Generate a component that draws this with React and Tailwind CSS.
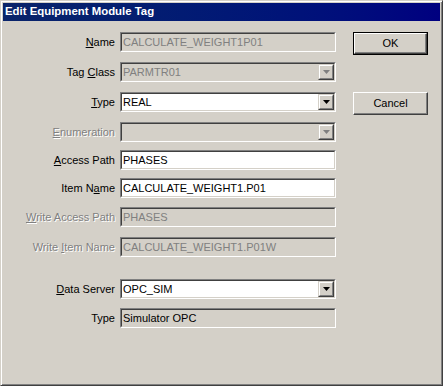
import React from 'react';

const FONT = "font-['Liberation_Sans',Arial,sans-serif]";

export default function App() {
  return (
    <div className={`${FONT} w-[443px] h-[386px] bg-[#d4d0c8] border border-t-[#d4d0c8] border-l-[#d4d0c8] border-b-[#404040] border-r-[#404040] shadow-[inset_1px_1px_0_#ffffff,inset_-1px_-1px_0_#808080] p-[2px] flex flex-col text-[11px] text-black`}>
      <div className="h-[18px] bg-gradient-to-r from-[#0a246a] to-[#000080] flex items-center pl-[2px] text-white font-bold text-[11.4px]">
        Edit Equipment Module Tag
      </div>

      <div className="flex">
        <div className="w-[333px] flex flex-col">
          <Row label={<><u>N</u>ame</>} mt="mt-[11px]">
            <TextBox value="CALCULATE_WEIGHT1P01" disabled />
          </Row>
          <Row label={<>Tag <u>C</u>lass</>} mt="mt-[10px]">
            <Combo value="PARMTR01" disabled />
          </Row>
          <Row label={<><u>T</u>ype</>} mt="mt-[10px]">
            <Combo value="REAL" />
          </Row>
          <Row label={<><u>E</u>numeration</>} mt="mt-[10px]" dim>
            <Combo value="" disabled />
          </Row>
          <Row label={<><u>A</u>ccess Path</>} mt="mt-[8px]">
            <TextBox value="PHASES" />
          </Row>
          <Row label={<>Item N<u>a</u>me</>} mt="mt-[8px]">
            <TextBox value="CALCULATE_WEIGHT1.P01" />
          </Row>
          <Row label={<><u>W</u>rite Access Path</>} mt="mt-[9px]" dim>
            <TextBox value="PHASES" disabled />
          </Row>
          <Row label={<>Write <u>I</u>tem Name</>} mt="mt-[10px]" dim>
            <TextBox value="CALCULATE_WEIGHT1.P01W" disabled />
          </Row>
          <Row label={<><u>D</u>ata Server</>} mt="mt-[22px]">
            <Combo value="OPC_SIM" />
          </Row>
          <Row label="Type" mt="mt-[9px]">
            <TextBox value="Simulator OPC" readOnly />
          </Row>
        </div>

        <div className="ml-[17px] flex flex-col pt-[11px]">
          <button className="w-[75px] h-[23px] border border-black bg-[#d4d0c8]">
            <div className="h-full border border-t-white border-l-white border-b-[#404040] border-r-[#404040] shadow-[inset_-1px_-1px_0_#808080] flex items-center justify-center">
              OK
            </div>
          </button>
          <button className="mt-[37px] w-[75px] h-[23px] border border-t-white border-l-white border-b-[#404040] border-r-[#404040] bg-[#d4d0c8] shadow-[inset_-1px_-1px_0_#808080] flex items-center justify-center">
            Cancel
          </button>
        </div>
      </div>
    </div>
  );
}

function Row({ label, mt, dim, children }) {
  return (
    <div className={`${mt} flex items-center h-[20px]`}>
      <div className={`w-[112px] text-right whitespace-nowrap ${dim ? 'text-[#808080] [text-shadow:1px_1px_0_#ffffff]' : ''}`}>
        {label}
      </div>
      <div className="ml-[5px] w-[216px] h-full">{children}</div>
    </div>
  );
}

function Sunken({ bg, children }) {
  return (
    <div className="h-full border border-t-[#808080] border-l-[#808080] border-b-white border-r-white">
      <div className={`h-full border border-t-[#404040] border-l-[#404040] border-b-[#d4d0c8] border-r-[#d4d0c8] ${bg} flex items-center`}>
        {children}
      </div>
    </div>
  );
}

function TextBox({ value, disabled, readOnly }) {
  const bg = disabled || readOnly ? 'bg-[#d4d0c8]' : 'bg-white';
  return (
    <Sunken bg={bg}>
      <span className={`pl-px whitespace-nowrap ${disabled ? 'text-[#808080]' : ''}`}>{value}</span>
    </Sunken>
  );
}

function Combo({ value, disabled }) {
  const bg = disabled ? 'bg-[#d4d0c8]' : 'bg-white';
  return (
    <Sunken bg={bg}>
      <span className={`flex-1 pl-px whitespace-nowrap ${disabled ? 'text-[#808080]' : ''}`}>{value}</span>
      <div className="w-[16px] h-full border border-t-[#d4d0c8] border-l-[#d4d0c8] border-b-[#404040] border-r-[#404040] bg-[#d4d0c8]">
        <div className="h-full border border-t-white border-l-white border-b-[#808080] border-r-[#808080] flex items-center justify-center">
          <svg width="7" height="4" viewBox="0 0 7 4">
            <path d="M0 0h7L3.5 4z" fill={disabled ? '#808080' : '#000000'} />
          </svg>
        </div>
      </div>
    </Sunken>
  );
}
